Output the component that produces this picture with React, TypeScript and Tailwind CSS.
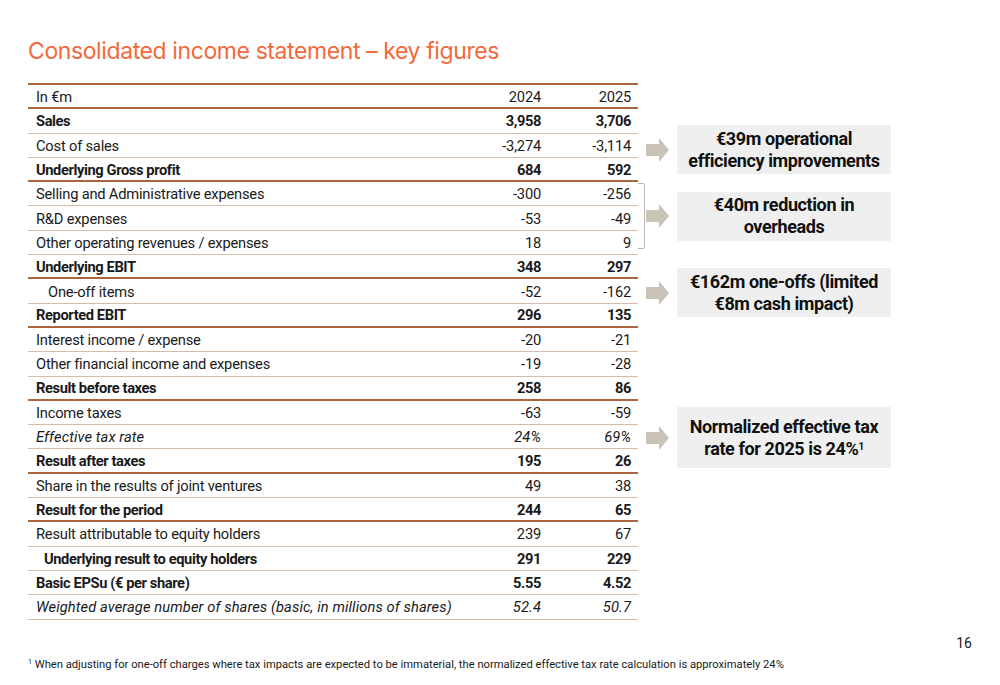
import React from "react";

type Row = {
  label: string;
  a: string;
  b: string;
  bold?: boolean;
  italic?: boolean;
  indent?: number;
  thick?: boolean;
};

const rows: Row[] = [
  { label: "In €m", a: "2024", b: "2025", thick: true },
  { label: "Sales", a: "3,958", b: "3,706", bold: true },
  { label: "Cost of sales", a: "-3,274", b: "-3,114" },
  { label: "Underlying Gross profit", a: "684", b: "592", bold: true, thick: true },
  { label: "Selling and Administrative expenses", a: "-300", b: "-256" },
  { label: "R&D expenses", a: "-53", b: "-49" },
  { label: "Other operating revenues / expenses", a: "18", b: "9" },
  { label: "Underlying EBIT", a: "348", b: "297", bold: true, thick: true },
  { label: "One-off items", a: "-52", b: "-162", indent: 1 },
  { label: "Reported EBIT", a: "296", b: "135", bold: true, thick: true },
  { label: "Interest income / expense", a: "-20", b: "-21" },
  { label: "Other financial income and expenses", a: "-19", b: "-28" },
  { label: "Result before taxes", a: "258", b: "86", bold: true, thick: true },
  { label: "Income taxes", a: "-63", b: "-59" },
  { label: "Effective tax rate", a: "24%", b: "69%", italic: true },
  { label: "Result after taxes", a: "195", b: "26", bold: true, thick: true },
  { label: "Share in the results of joint ventures", a: "49", b: "38" },
  { label: "Result for the period", a: "244", b: "65", bold: true, thick: true },
  { label: "Result attributable to equity holders", a: "239", b: "67" },
  { label: "Underlying result to equity holders", a: "291", b: "229", bold: true, indent: 2 },
  { label: "Basic EPSu (€ per share)", a: "5.55", b: "4.52", bold: true },
  { label: "Weighted average number of shares (basic, in millions of shares)", a: "52.4", b: "50.7", italic: true },
];

function Arrow() {
  return (
    <svg width="23" height="24" viewBox="0 0 23 24" className="shrink-0">
      <rect x="0" y="6" width="14" height="12" fill="#c9c2b6" />
      <polygon points="13,0 23,12 13,24" fill="#c9c2b6" />
    </svg>
  );
}

function Callout({ children, className }: { children: React.ReactNode; className: string }) {
  return (
    <div className={`w-[214px] bg-[#efefef] flex items-center justify-center text-center text-[18px] leading-[22px] font-bold tracking-[-0.4px] text-[#111] ${className}`}>
      {children}
    </div>
  );
}

export default function App() {
  return (
    <div className="w-[1000px] h-[685px] bg-white relative font-['Roboto',sans-serif] text-[#1a1a1a] overflow-hidden">
      {/* ── Title ─────────────────────────────── */}
      <h1 className="pl-[28px] pt-[36px] h-[83px] text-[23px] leading-[30px] text-[#f4693a] tracking-[-0.4px] font-['Inter',sans-serif]">
        Consolidated income statement – key figures
      </h1>

      <div className="flex pl-[28px]">
        {/* ── Table ─────────────────────────────── */}
        <div className="w-[610px] border-t-2 border-[#a9663f]">
          {rows.map((r, i) => (
            <div
              key={i}
              className={`flex items-center h-[24.3px] pt-[1px] text-[14.7px] ${
                r.thick ? "border-b-2 border-[#a9663f]" : "border-b border-[#d9bca8]"
              } ${r.bold ? "font-bold tracking-[-0.4px]" : r.italic ? "italic tracking-[0.1px]" : "tracking-[-0.2px]"}`}
            >
              <div className={`flex-1 ${r.indent === 1 ? "pl-[20px]" : r.indent === 2 ? "pl-[16px]" : "pl-[8px]"}`}>{r.label}</div>
              <div className="w-[80px] text-right">{r.a}</div>
              <div className="w-[97px] text-right pr-[7px]">{r.b}</div>
            </div>
          ))}
        </div>

        {/* ── Callouts ──────────────────────────── */}
        <div className="flex flex-col">
          <div className="flex items-center mt-[42px] h-[49px]">
            <div className="w-[8px]" />
            <Arrow />
            <div className="w-[8px]" />
            <Callout className="h-[49px]">
              €39m operational<br />efficiency improvements
            </Callout>
          </div>
          <div className="flex items-center mt-[9px] h-[66px]">
            <div className="w-[7px] h-full border-y-[1.5px] border-r-[1.5px] border-[#c2b9ac] rounded-r-[2px]" />
            <div className="w-[1px]" />
            <Arrow />
            <div className="w-[8px]" />
            <Callout className="h-[49px]">
              €40m reduction in<br />overheads
            </Callout>
          </div>
          <div className="flex items-center mt-[19px] h-[49px]">
            <div className="w-[8px]" />
            <Arrow />
            <div className="w-[8px]" />
            <Callout className="h-[49px]">
              €162m one-offs (limited<br />€8m cash impact)
            </Callout>
          </div>
          <div className="flex items-center mt-[90px] h-[61px]">
            <div className="w-[8px]" />
            <Arrow />
            <div className="w-[8px]" />
            <Callout className="h-[61px]">
              <span>
                Normalized effective tax<br />rate for 2025 is 24%<sup className="text-[10px]">1</sup>
              </span>
            </Callout>
          </div>
        </div>
      </div>

      {/* ── Footer ────────────────────────────── */}
      <div className="flex justify-end pr-[28px] mt-[14px] text-[14px] leading-[18px]">16</div>
      <div className="pl-[28px] mt-[6px] text-[11.2px] leading-[14px] text-[#1a1a1a]">
        <sup className="text-[7px]">1</sup> When adjusting for one-off charges where tax impacts are expected to be immaterial, the normalized effective tax rate calculation is approximately 24%
      </div>
    </div>
  );
}
